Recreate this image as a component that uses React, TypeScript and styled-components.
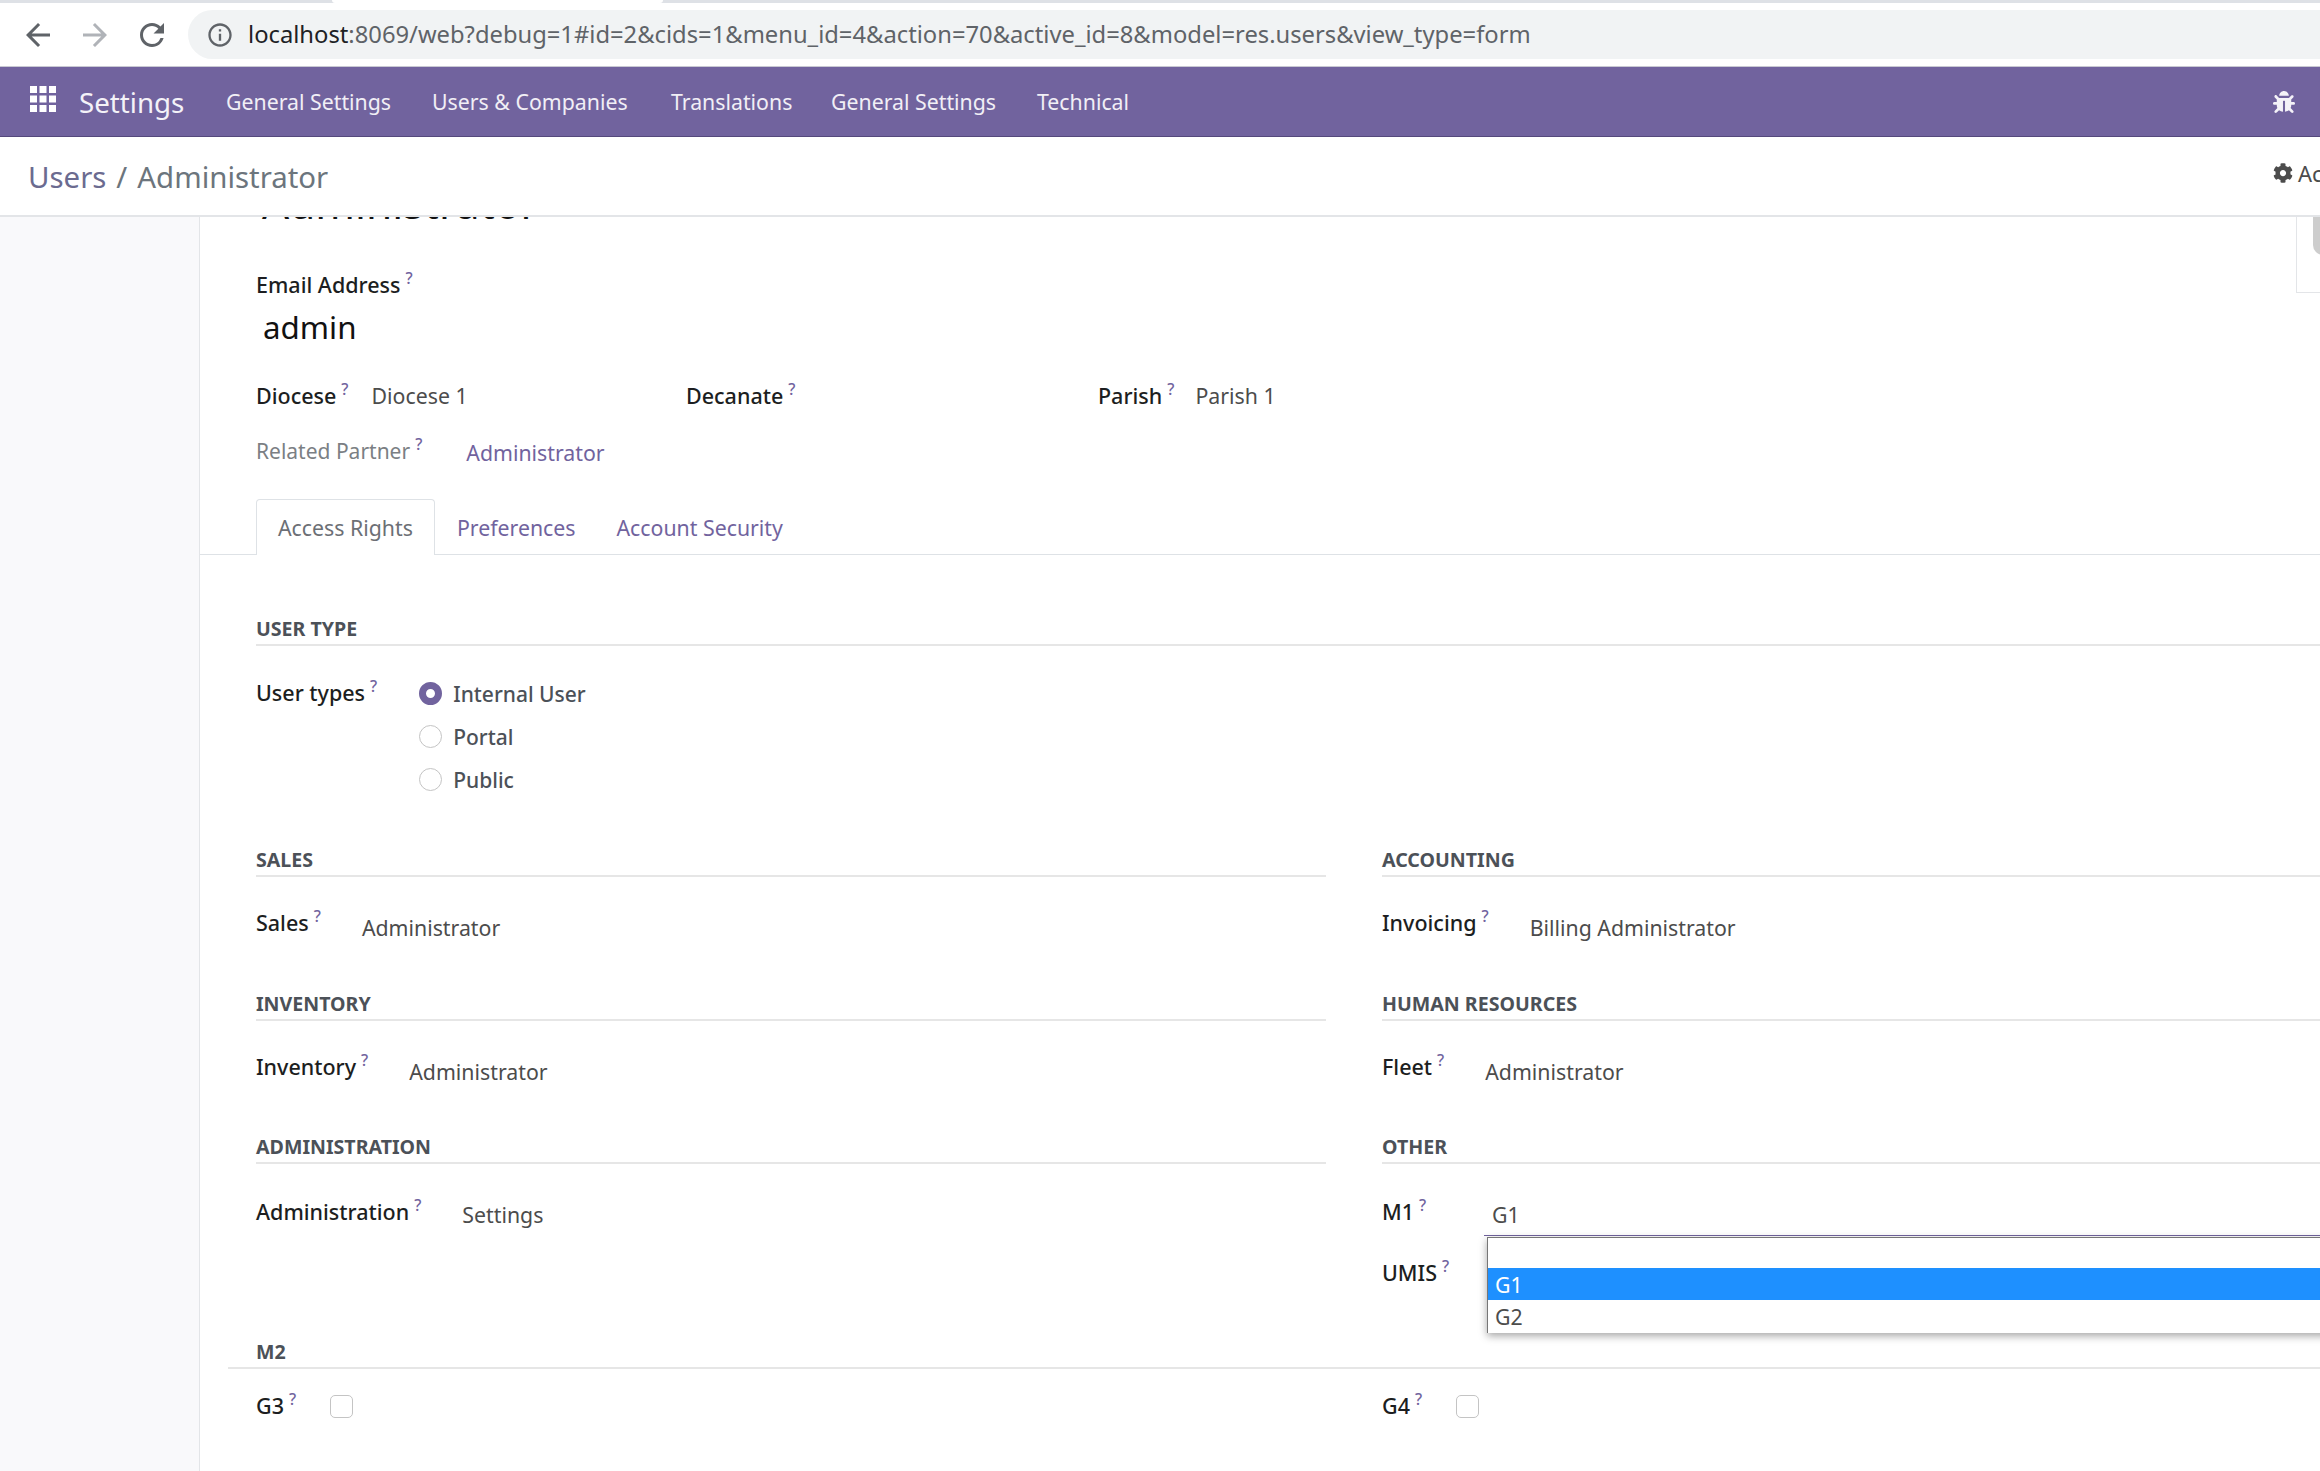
import styled, { createGlobalStyle } from "styled-components";
import { FaBug, FaCog } from "react-icons/fa";
import { MdArrowBack, MdArrowForward, MdInfoOutline, MdRefresh } from "react-icons/md";

const GlobalStyle = createGlobalStyle`
    html, body {
        margin: 0;
        padding: 0;
        background: #fff;
    }
    * {
        box-sizing: border-box;
    }
`

const Page = styled.div`
    width: 2320px;
    height: 1471px;
    overflow: hidden;
    display: flex;
    flex-direction: column;
    font-family: "Noto Sans", "Liberation Sans", sans-serif;
    font-size: 21.3px;
    color: #212529;
`

const TabStrip = styled.div`
    height: 3px;
    padding-left: 332px;
    background: #dee1e6;
`

const ActiveTabEdge = styled.div`
    width: 331px;
    height: 3px;
    background: #fff;
    border-radius: 0 0 8px 8px;
`

const ChromeBar = styled.div`
    height: 63px;
    padding: 7px 0 7px 26px;
    display: flex;
    align-items: center;
    background: #fff;
`

const NavIcon = styled.div<{ $muted?: boolean }>`
    width: 24px;
    margin-right: 33px;
    display: flex;
    justify-content: center;
    font-size: 36px;
    color: ${props => props.$muted ? "#b0b3b8" : "#5f6368"};
    svg {
        flex-shrink: 0;
    }
`

const AddressBar = styled.div`
    flex: 1;
    height: 49px;
    margin-left: -9px;
    padding-left: 18px;
    display: flex;
    align-items: center;
    gap: 14px;
    background: #f1f3f4;
    border-radius: 25px 0 0 25px;
    font-size: 23.75px;
    color: #5f6368;
    white-space: nowrap;
    svg {
        font-size: 28px;
        color: #5f6368;
    }
`

const UrlText = styled.span`
    margin-top: -2px;
`

const Host = styled.span`
    color: #202124;
`

const Navbar = styled.div`
    height: 71px;
    padding: 0 25px 0 30px;
    display: flex;
    align-items: center;
    background: #71639e;
    border-top: 1px solid #c9c9d3;
    border-bottom: 1px solid #55497c;
    color: #fff;
`

const AppsIcon = styled.svg`
    width: 26px;
    height: 26px;
    margin: -6px 23px 0 0;
    fill: #fff;
`

const Brand = styled.div`
    width: 147px;
    font-size: 27.7px;
    color: #f4f2f8;
`

const MenuItem = styled.div<{ $width: number }>`
    width: ${props => props.$width}px;
    color: #f1eff6;
`

const BugIcon = styled.div`
    margin-left: auto;
    display: flex;
    font-size: 22px;
    color: #f4f2f8;
`

const Breadcrumbs = styled.div`
    height: 80px;
    padding: 2px 0 0 28px;
    flex-shrink: 0;
    display: flex;
    align-items: center;
    justify-content: space-between;
    background: #fff;
    border-bottom: 2px solid #e3e5e8;
    font-size: 29.4px;
    color: #6c757d;
`

const Crumb = styled.span`
    color: #6b6b90;
`

const CrumbSeparator = styled.span`
    margin: 0 10px;
`

const ActionButton = styled.div`
    width: 47px;
    margin-top: -8px;
    display: flex;
    align-items: center;
    gap: 5px;
    overflow: hidden;
    font-size: 22px;
    color: #4c4c4c;
    svg {
        flex-shrink: 0;
        font-size: 20px;
    }
`

const Body = styled.div`
    flex: 1;
    min-height: 0;
    display: flex;
    overflow: hidden;
    background: #f9f9fb;
`

const Sidebar = styled.div`
    width: 199px;
    flex-shrink: 0;
`

const Sheet = styled.div`
    position: relative;
    flex: 1;
    background: #fff;
    border-left: 1px solid #e3e5e8;
`

const AvatarBox = styled.div`
    position: absolute;
    top: 0;
    left: 2096px;
    width: 40px;
    height: 76px;
    border-left: 1px solid #e3e5e8;
    border-bottom: 1px solid #e3e5e8;
`

const AvatarImage = styled.div`
    margin-left: 16px;
    height: 38px;
    background: #cdcdcd;
    border-radius: 0 0 0 10px;
`

const Head = styled.div`
    padding-left: 56px;
`

const Title = styled.h1`
    margin: -42px 0 0 6px;
    height: 57px;
    font-size: 42.5px;
    line-height: 56px;
    font-weight: 400;
    color: #111;
`

const Label = styled.div<{ $muted?: boolean, $width?: number, $drop?: number }>`
    display: inline-flex;
    height: 32px;
    margin-top: ${props => props.$drop ?? 0}px;
    line-height: 32px;
    font-size: ${props => props.$muted ? 21 : 21.5}px;
    white-space: nowrap;
    flex-shrink: 0;
    width: ${props => props.$width ? `${props.$width}px` : "auto"};
    color: ${props => props.$muted ? "#7b7f84" : "#1c1e21"};
    font-weight: ${props => props.$muted ? 400 : 500};
`

const Help = styled.span`
    margin: 1px 0 0 5px;
    font-size: 16px;
    line-height: 16px;
    font-weight: 500;
    color: #71639e;
`

const EmailLabel = styled(Label)`
    display: flex;
    margin-top: 37px;
`

const EmailValue = styled.div`
    height: 44px;
    margin: 4px 0 0 7px;
    font-size: 31.3px;
    line-height: 44px;
    color: #111;
`

const PlaceRow = styled.div`
    margin-top: 31px;
    display: grid;
    grid-template-columns: 430px 412px 1fr;
`

const Field = styled.div<{ $gap?: number }>`
    display: flex;
    gap: ${props => props.$gap ?? 41}px;
`

const Value = styled.div<{ $link?: boolean, $drop?: number }>`
    line-height: 32px;
    padding-top: ${props => props.$drop ?? 5}px;
    color: ${props => props.$link ? "#71639e" : "#4c4c4c"};
    white-space: nowrap;
`

const PartnerRow = styled(Field)`
    margin-top: 23px;
`

const TabBar = styled.div`
    margin-top: 30px;
    height: 56px;
    padding-left: 56px;
    display: flex;
    border-bottom: 1px solid #dee2e6;
`

const Tab = styled.div<{ $active?: boolean }>`
    height: 56px;
    padding: 12px ${props => props.$active ? 21 : 18}px 0 21px;
    line-height: 32px;
    border: 1px solid ${props => props.$active ? "#dee2e6" : "transparent"};
    border-bottom: none;
    border-radius: 4px 4px 0 0;
    background: ${props => props.$active ? "#fff" : "transparent"};
    color: ${props => props.$active ? "#6c6f75" : "#71639e"};
`

const Content = styled.div`
    padding-left: 56px;
`

const Heading = styled.div`
    height: 32px;
    padding-top: 1px;
    line-height: 28px;
    border-bottom: 2px solid #e6e6e6;
    font-size: 19.6px;
    font-weight: 700;
    color: #4c5158;
`

const UserTypeSection = styled.div`
    margin-top: 59px;
`

const UserTypeRow = styled(Field)`
    margin-top: 26px;
    gap: 42px;
`

const UserTypeLabel = styled(Label)`
    margin-top: 5px;
`

const RadioList = styled.div`
    display: flex;
    flex-direction: column;
`

const RadioRow = styled.div`
    height: 43px;
    display: flex;
    align-items: center;
    gap: 11px;
    font-weight: 500;
    font-size: 21px;
    color: #4c5158;
`

const Radio = styled.span<{ $checked?: boolean }>`
    width: 23px;
    height: 23px;
    border-radius: 50%;
    border: ${props => props.$checked ? "7px solid #71639e" : "1px solid #c4c4c4"};
    background: #fff;
`

const SectionGrid = styled.div`
    margin-top: 44px;
    display: grid;
    grid-template-columns: 1070px 1070px;
    grid-template-rows: 143.5px 143.5px 205px;
    column-gap: 56px;
`

const Group = styled.div`
    display: flex;
    flex-direction: column;
`

const GroupField = styled(Field)`
    margin-top: 30px;
`

const TableFields = styled.div`
    margin-top: 30px;
    display: flex;
    flex-direction: column;
    gap: 19px;
`

const SelectField = styled.div`
    position: relative;
    width: 960px;
    height: 42px;
    border-bottom: 1px solid #71639e;
    padding: 5px 8px 0;
    line-height: 32px;
    color: #4c4c4c;
`

const Dropdown = styled.div`
    position: absolute;
    top: 43px;
    left: 3px;
    width: 960px;
    height: 96px;
    background: #fff;
    border-top: 1px solid #767676;
    border-left: 1px solid #767676;
    box-shadow: 0 3px 8px rgba(0, 0, 0, 0.35);
`

const Option = styled.div<{ $selected?: boolean }>`
    height: 32px;
    padding-left: 7px;
    line-height: 34px;
    background: ${props => props.$selected ? "#1e90ff" : "#fff"};
    color: ${props => props.$selected ? "#fff" : "#4c4c4c"};
`

const EmptyOption = styled.div`
    height: 30px;
`

const BottomHeading = styled(Heading)`
    margin-left: -28px;
    padding-left: 28px;
`

const CheckGrid = styled.div`
    margin-top: 21px;
    display: grid;
    grid-template-columns: 1070px 1070px;
    column-gap: 56px;
`

const CheckField = styled(Field)`
    gap: 34px;
    align-items: center;
`

const Checkbox = styled.span`
    width: 23px;
    height: 23px;
    background: #fff;
    border: 1px solid #c4c4c4;
    border-radius: 5px;
`

function HelpLabel({ text, muted, width, drop }: { text: string, muted?: boolean, width?: number, drop?: number }) {
    return (
        <Label $muted={muted} $width={width} $drop={drop}>
            {text}<Help>?</Help>
        </Label>
    )
}

function SimpleGroup({ title, label, value, drop }: { title: string, label: string, value: string, drop?: number }) {
    return (
        <Group>
            <Heading>{title}</Heading>
            <GroupField>
                <HelpLabel text={label} drop={drop} />
                <Value>{value}</Value>
            </GroupField>
        </Group>
    )
}

function App() {
    return (
        <Page>
            <GlobalStyle />
            <TabStrip><ActiveTabEdge /></TabStrip>
            <ChromeBar>
                <NavIcon><MdArrowBack /></NavIcon>
                <NavIcon $muted><MdArrowForward /></NavIcon>
                <NavIcon><MdRefresh /></NavIcon>
                <AddressBar>
                    <MdInfoOutline />
                    <UrlText><Host>localhost</Host>:8069/web?debug=1#id=2&amp;cids=1&amp;menu_id=4&amp;action=70&amp;active_id=8&amp;model=res.users&amp;view_type=form</UrlText>
                </AddressBar>
            </ChromeBar>
            <Navbar>
                <AppsIcon viewBox="0 0 26 26">
                    <rect x="0" y="0" width="7" height="7" />
                    <rect x="9.5" y="0" width="7" height="7" />
                    <rect x="19" y="0" width="7" height="7" />
                    <rect x="0" y="9.5" width="7" height="7" />
                    <rect x="9.5" y="9.5" width="7" height="7" />
                    <rect x="19" y="9.5" width="7" height="7" />
                    <rect x="0" y="19" width="7" height="7" />
                    <rect x="9.5" y="19" width="7" height="7" />
                    <rect x="19" y="19" width="7" height="7" />
                </AppsIcon>
                <Brand>Settings</Brand>
                <MenuItem $width={206}>General Settings</MenuItem>
                <MenuItem $width={239}>Users &amp; Companies</MenuItem>
                <MenuItem $width={160}>Translations</MenuItem>
                <MenuItem $width={206}>General Settings</MenuItem>
                <MenuItem $width={100}>Technical</MenuItem>
                <BugIcon><FaBug /></BugIcon>
            </Navbar>
            <Breadcrumbs>
                <div><Crumb>Users</Crumb><CrumbSeparator>/</CrumbSeparator>Administrator</div>
                <ActionButton><FaCog />Action</ActionButton>
            </Breadcrumbs>
            <Body>
                <Sidebar />
                <Sheet>
                    <AvatarBox><AvatarImage /></AvatarBox>
                    <Head>
                        <Title>Administrator</Title>
                        <EmailLabel>Email Address<Help>?</Help></EmailLabel>
                        <EmailValue>admin</EmailValue>
                        <PlaceRow>
                            <Field $gap={23}>
                                <HelpLabel text="Diocese" />
                                <Value $drop={0}>Diocese 1</Value>
                            </Field>
                            <Field $gap={23}>
                                <HelpLabel text="Decanate" />
                            </Field>
                            <Field $gap={21}>
                                <HelpLabel text="Parish" />
                                <Value $drop={0}>Parish 1</Value>
                            </Field>
                        </PlaceRow>
                        <PartnerRow $gap={44}>
                            <HelpLabel text="Related Partner" muted />
                            <Value $link $drop={2}>Administrator</Value>
                        </PartnerRow>
                    </Head>
                    <TabBar>
                        <Tab $active>Access Rights</Tab>
                        <Tab>Preferences</Tab>
                        <Tab>Account Security</Tab>
                    </TabBar>
                    <Content>
                        <UserTypeSection>
                            <Heading>USER TYPE</Heading>
                            <UserTypeRow>
                                <UserTypeLabel>User types<Help>?</Help></UserTypeLabel>
                                <RadioList>
                                    <RadioRow><Radio $checked />Internal User</RadioRow>
                                    <RadioRow><Radio />Portal</RadioRow>
                                    <RadioRow><Radio />Public</RadioRow>
                                </RadioList>
                            </UserTypeRow>
                        </UserTypeSection>
                        <SectionGrid>
                            <SimpleGroup title="SALES" label="Sales" value="Administrator" />
                            <SimpleGroup title="ACCOUNTING" label="Invoicing" value="Billing Administrator" />
                            <SimpleGroup title="INVENTORY" label="Inventory" value="Administrator" />
                            <SimpleGroup title="HUMAN RESOURCES" label="Fleet" value="Administrator" />
                            <SimpleGroup title="ADMINISTRATION" label="Administration" value="Settings" drop={2} />
                            <Group>
                                <Heading>OTHER</Heading>
                                <TableFields>
                                    <Field $gap={0}>
                                        <HelpLabel text="M1" width={102} drop={2} />
                                        <SelectField>
                                            G1
                                            <Dropdown>
                                                <EmptyOption />
                                                <Option $selected>G1</Option>
                                                <Option>G2</Option>
                                            </Dropdown>
                                        </SelectField>
                                    </Field>
                                    <HelpLabel text="UMIS" drop={2} />
                                </TableFields>
                            </Group>
                        </SectionGrid>
                        <BottomHeading>M2</BottomHeading>
                        <CheckGrid>
                            <CheckField>
                                <HelpLabel text="G3" />
                                <Checkbox />
                            </CheckField>
                            <CheckField>
                                <HelpLabel text="G4" />
                                <Checkbox />
                            </CheckField>
                        </CheckGrid>
                    </Content>
                </Sheet>
            </Body>
        </Page>
    )
}

export default App;
